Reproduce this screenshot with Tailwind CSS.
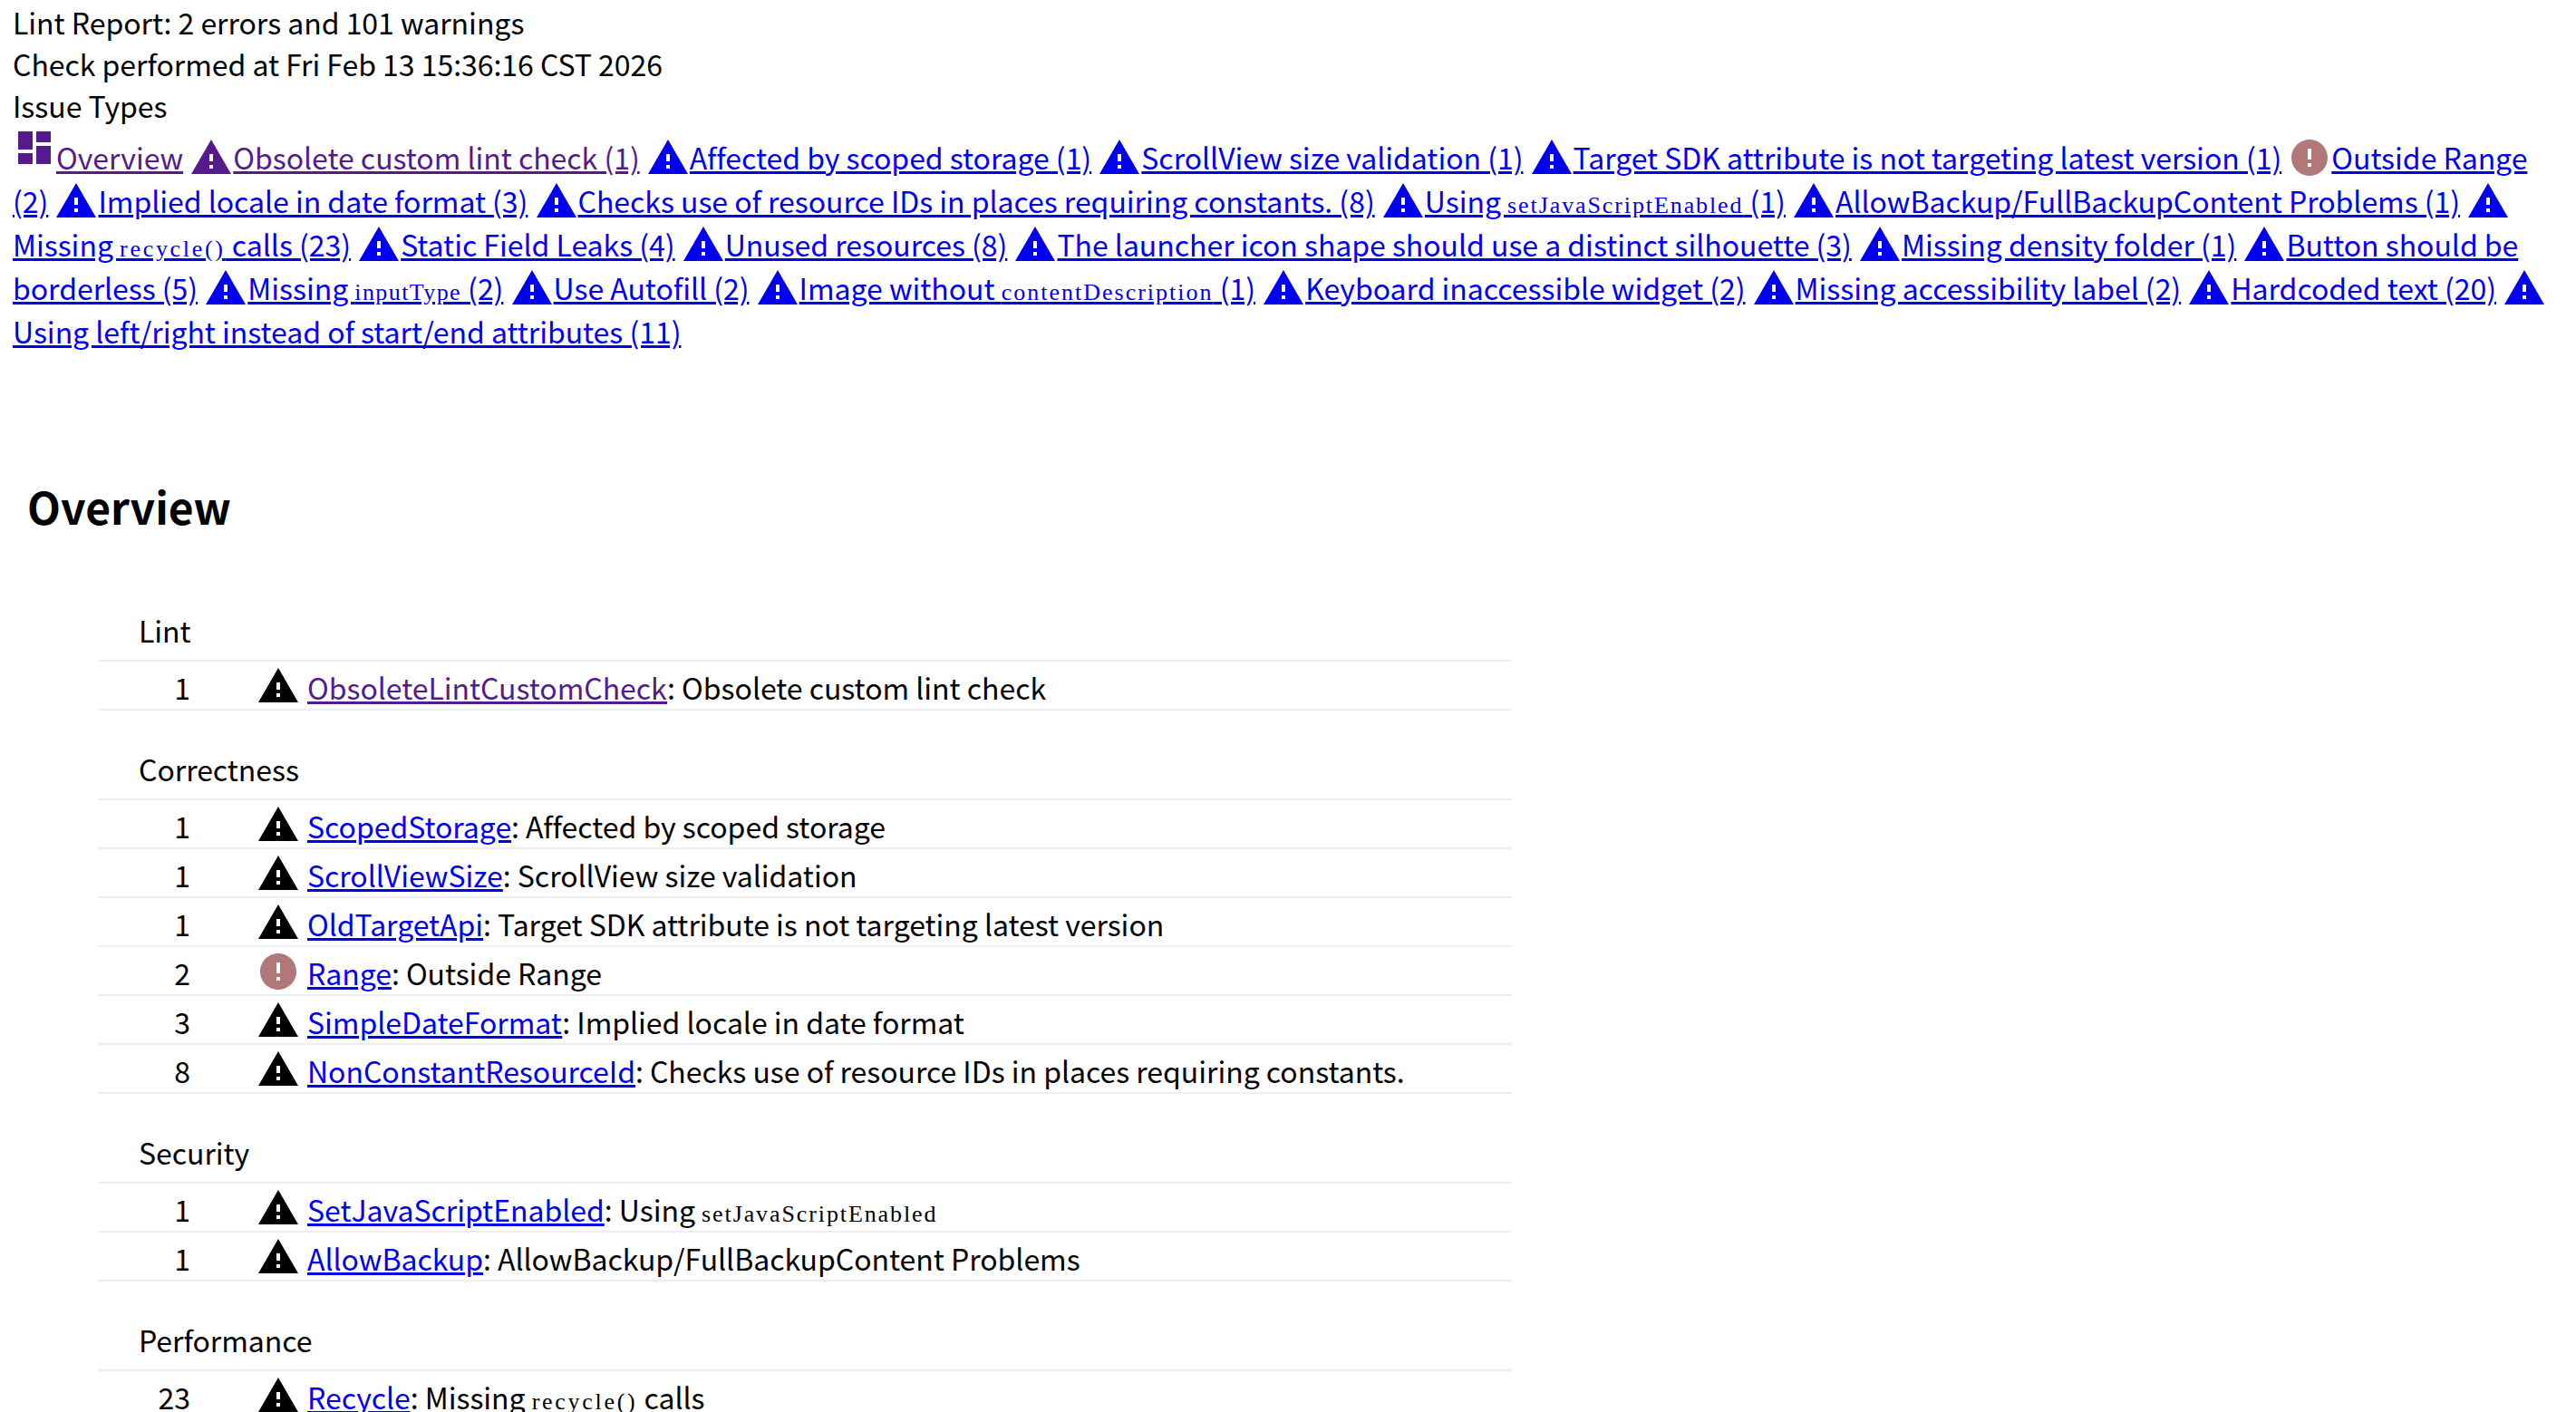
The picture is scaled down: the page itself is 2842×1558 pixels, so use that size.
<!DOCTYPE html>
<html lang="en">
<head>
<meta charset="UTF-8">
<title>Lint Report</title>
<script src="https://cdn.jsdelivr.net/npm/@tailwindcss/browser@4"></script>
</head>
<body class="bg-white text-black font-['Noto_Sans_CJK_SC','Noto_Sans',sans-serif] text-[32px] leading-[46px] tracking-[-0.03px] h-screen overflow-hidden">
<svg class="hidden">
  <symbol id="warn" viewBox="0 0 24 24"><path fill-rule="evenodd" d="M1 21h22L12 2 1 21zm12-3h-2v-2h2v2zm0-4h-2v-4h2v4z"/></symbol>
  <symbol id="err" viewBox="0 0 24 24"><path fill-rule="evenodd" d="M12 2C6.48 2 2 6.48 2 12s4.48 10 10 10 10-4.480 10-10S17.520 2 12 2zm1 15h-2v-2h2v2zm0-4h-2V7h2v6z"/></symbol>
  <symbol id="dash" viewBox="0 0 24 24"><path d="M3 13h8V3H3v10zm0 8h8v-6H3v6zm10 0h8V11h-8v10zm0-18v6h8V3h-8z"/></symbol>
</svg>

<div class="px-[14px] pt-[1px]">
  <div>Lint Report: 2 errors and 101 warnings</div>
  <div>Check performed at Fri Feb 13 15:36:16 CST 2026</div>
  <div>Issue Types</div>
  <div class="text-[#0000ee] w-[2820px]">
    <svg class="inline w-12 h-12 align-baseline fill-[#551a8b]"><use href="#dash"/></svg><a class="underline text-[#551a8b]">Overview</a>
    <svg class="inline w-12 h-12 mt-[-1px] align-[-11px] fill-[#551a8b]"><use href="#warn"/></svg><a class="underline text-[#551a8b]">Obsolete custom lint check (1)</a>
    <svg class="inline w-12 h-12 mt-[-1px] align-[-11px] fill-[#0000ee]"><use href="#warn"/></svg><a class="underline">Affected by scoped storage (1)</a>
    <svg class="inline w-12 h-12 mt-[-1px] align-[-11px] fill-[#0000ee]"><use href="#warn"/></svg><a class="underline">ScrollView size validation (1)</a>
    <svg class="inline w-12 h-12 mt-[-1px] align-[-11px] fill-[#0000ee]"><use href="#warn"/></svg><a class="underline">Target SDK attribute is not targeting latest version (1)</a>
    <svg class="inline w-12 h-12 mt-[-1px] align-[-11px] fill-[#b07878]"><use href="#err"/></svg><a class="underline">Outside Range (2)</a>
    <svg class="inline w-12 h-12 mt-[-1px] align-[-11px] fill-[#0000ee]"><use href="#warn"/></svg><a class="underline">Implied locale in date format (3)</a>
    <svg class="inline w-12 h-12 mt-[-1px] align-[-11px] fill-[#0000ee]"><use href="#warn"/></svg><a class="underline">Checks use of resource IDs in places requiring constants. (8)</a>
    <svg class="inline w-12 h-12 mt-[-1px] align-[-11px] fill-[#0000ee]"><use href="#warn"/></svg><a class="underline">Using <code class="font-['Liberation_Serif',serif] text-[26px] leading-none tracking-[1.9px]">setJavaScriptEnabled</code> (1)</a>
    <svg class="inline w-12 h-12 mt-[-1px] align-[-11px] fill-[#0000ee]"><use href="#warn"/></svg><a class="underline">AllowBackup/FullBackupContent Problems (1)</a>
    <svg class="inline w-12 h-12 mt-[-1px] align-[-11px] fill-[#0000ee]"><use href="#warn"/></svg><a class="underline">Missing <code class="font-['Liberation_Serif',serif] text-[26px] leading-none tracking-[2.7px]">recycle()</code> calls (23)</a>
    <svg class="inline w-12 h-12 mt-[-1px] align-[-11px] fill-[#0000ee]"><use href="#warn"/></svg><a class="underline">Static Field Leaks (4)</a>
    <svg class="inline w-12 h-12 mt-[-1px] align-[-11px] fill-[#0000ee]"><use href="#warn"/></svg><a class="underline">Unused resources (8)</a>
    <svg class="inline w-12 h-12 mt-[-1px] align-[-11px] fill-[#0000ee]"><use href="#warn"/></svg><a class="underline">The launcher icon shape should use a distinct silhouette (3)</a>
    <svg class="inline w-12 h-12 mt-[-1px] align-[-11px] fill-[#0000ee]"><use href="#warn"/></svg><a class="underline">Missing density folder (1)</a>
    <svg class="inline w-12 h-12 mt-[-1px] align-[-11px] fill-[#0000ee]"><use href="#warn"/></svg><a class="underline">Button should be borderless (5)</a>
    <svg class="inline w-12 h-12 mt-[-1px] align-[-11px] fill-[#0000ee]"><use href="#warn"/></svg><a class="underline">Missing <code class="font-['Liberation_Serif',serif] text-[26px] leading-none tracking-[1.4px]">inputType</code> (2)</a>
    <svg class="inline w-12 h-12 mt-[-1px] align-[-11px] fill-[#0000ee]"><use href="#warn"/></svg><a class="underline">Use Autofill (2)</a>
    <svg class="inline w-12 h-12 mt-[-1px] align-[-11px] fill-[#0000ee]"><use href="#warn"/></svg><a class="underline">Image without <code class="font-['Liberation_Serif',serif] text-[26px] leading-none tracking-[2px]">contentDescription</code> (1)</a>
    <svg class="inline w-12 h-12 mt-[-1px] align-[-11px] fill-[#0000ee]"><use href="#warn"/></svg><a class="underline">Keyboard inaccessible widget (2)</a>
    <svg class="inline w-12 h-12 mt-[-1px] align-[-11px] fill-[#0000ee]"><use href="#warn"/></svg><a class="underline">Missing accessibility label (2)</a>
    <svg class="inline w-12 h-12 mt-[-1px] align-[-11px] fill-[#0000ee]"><use href="#warn"/></svg><a class="underline">Hardcoded text (20)</a>
    <svg class="inline w-12 h-12 mt-[-1px] align-[-11px] fill-[#0000ee]"><use href="#warn"/></svg><a class="underline">Using left/right instead of start/end attributes (11)</a>
  </div>
</div>

<h2 class="font-bold text-[48px] leading-[70px] ml-[30px] mt-[135px]">Overview</h2>

<table id="overview" class="ml-[108px] mt-[79px] w-[1560px] table-fixed border-collapse">
  <colgroup><col class="w-[102px]"><col class="w-[121px]"><col></colgroup>
  <tbody>
    <tr><td colspan="3" class="pl-[45px] pb-[10px]">Lint</td></tr>
    <tr class="border-y-2 border-[#eeeeee] h-[54px]"><td class="text-right pt-[4px]">1</td><td class="pl-[73px] pt-[2px]"><svg class="w-12 h-12"><use href="#warn"/></svg></td><td class="pl-[8px] pt-[4px]"><a class="underline text-[#551a8b]">ObsoleteLintCustomCheck</a>: Obsolete custom lint check</td></tr>

    <tr><td colspan="3" class="pl-[45px] pt-[41px] pb-[10px]">Correctness</td></tr>
    <tr class="border-y-2 border-[#eeeeee] h-[54px]"><td class="text-right pt-[4px]">1</td><td class="pl-[73px] pt-[2px]"><svg class="w-12 h-12"><use href="#warn"/></svg></td><td class="pl-[8px] pt-[4px]"><a class="underline text-[#0000ee]">ScopedStorage</a>: Affected by scoped storage</td></tr>
    <tr class="border-y-2 border-[#eeeeee] h-[54px]"><td class="text-right pt-[4px]">1</td><td class="pl-[73px] pt-[2px]"><svg class="w-12 h-12"><use href="#warn"/></svg></td><td class="pl-[8px] pt-[4px]"><a class="underline text-[#0000ee]">ScrollViewSize</a>: ScrollView size validation</td></tr>
    <tr class="border-y-2 border-[#eeeeee] h-[54px]"><td class="text-right pt-[4px]">1</td><td class="pl-[73px] pt-[2px]"><svg class="w-12 h-12"><use href="#warn"/></svg></td><td class="pl-[8px] pt-[4px]"><a class="underline text-[#0000ee]">OldTargetApi</a>: Target SDK attribute is not targeting latest version</td></tr>
    <tr class="border-y-2 border-[#eeeeee] h-[54px]"><td class="text-right pt-[4px]">2</td><td class="pl-[73px] pt-[2px]"><svg class="w-12 h-12 fill-[#b07878]"><use href="#err"/></svg></td><td class="pl-[8px] pt-[4px]"><a class="underline text-[#0000ee]">Range</a>: Outside Range</td></tr>
    <tr class="border-y-2 border-[#eeeeee] h-[54px]"><td class="text-right pt-[4px]">3</td><td class="pl-[73px] pt-[2px]"><svg class="w-12 h-12"><use href="#warn"/></svg></td><td class="pl-[8px] pt-[4px]"><a class="underline text-[#0000ee]">SimpleDateFormat</a>: Implied locale in date format</td></tr>
    <tr class="border-y-2 border-[#eeeeee] h-[54px]"><td class="text-right pt-[4px]">8</td><td class="pl-[73px] pt-[2px]"><svg class="w-12 h-12"><use href="#warn"/></svg></td><td class="pl-[8px] pt-[4px]"><a class="underline text-[#0000ee]">NonConstantResourceId</a>: Checks use of resource IDs in places requiring constants.</td></tr>

    <tr><td colspan="3" class="pl-[45px] pt-[41px] pb-[10px]">Security</td></tr>
    <tr class="border-y-2 border-[#eeeeee] h-[54px]"><td class="text-right pt-[4px]">1</td><td class="pl-[73px] pt-[2px]"><svg class="w-12 h-12"><use href="#warn"/></svg></td><td class="pl-[8px] pt-[4px]"><a class="underline text-[#0000ee]">SetJavaScriptEnabled</a>: Using <code class="font-['Liberation_Serif',serif] text-[26px] leading-none tracking-[1.9px]">setJavaScriptEnabled</code></td></tr>
    <tr class="border-y-2 border-[#eeeeee] h-[54px]"><td class="text-right pt-[4px]">1</td><td class="pl-[73px] pt-[2px]"><svg class="w-12 h-12"><use href="#warn"/></svg></td><td class="pl-[8px] pt-[4px]"><a class="underline text-[#0000ee]">AllowBackup</a>: AllowBackup/FullBackupContent Problems</td></tr>

    <tr><td colspan="3" class="pl-[45px] pt-[41px] pb-[10px]">Performance</td></tr>
    <tr class="border-y-2 border-[#eeeeee] h-[54px]"><td class="text-right pt-[4px]">23</td><td class="pl-[73px] pt-[2px]"><svg class="w-12 h-12"><use href="#warn"/></svg></td><td class="pl-[8px] pt-[4px]"><a class="underline text-[#0000ee]">Recycle</a>: Missing <code class="font-['Liberation_Serif',serif] text-[26px] leading-none tracking-[2.7px]">recycle()</code> calls</td></tr>
  </tbody>
</table>
</body>
</html>
